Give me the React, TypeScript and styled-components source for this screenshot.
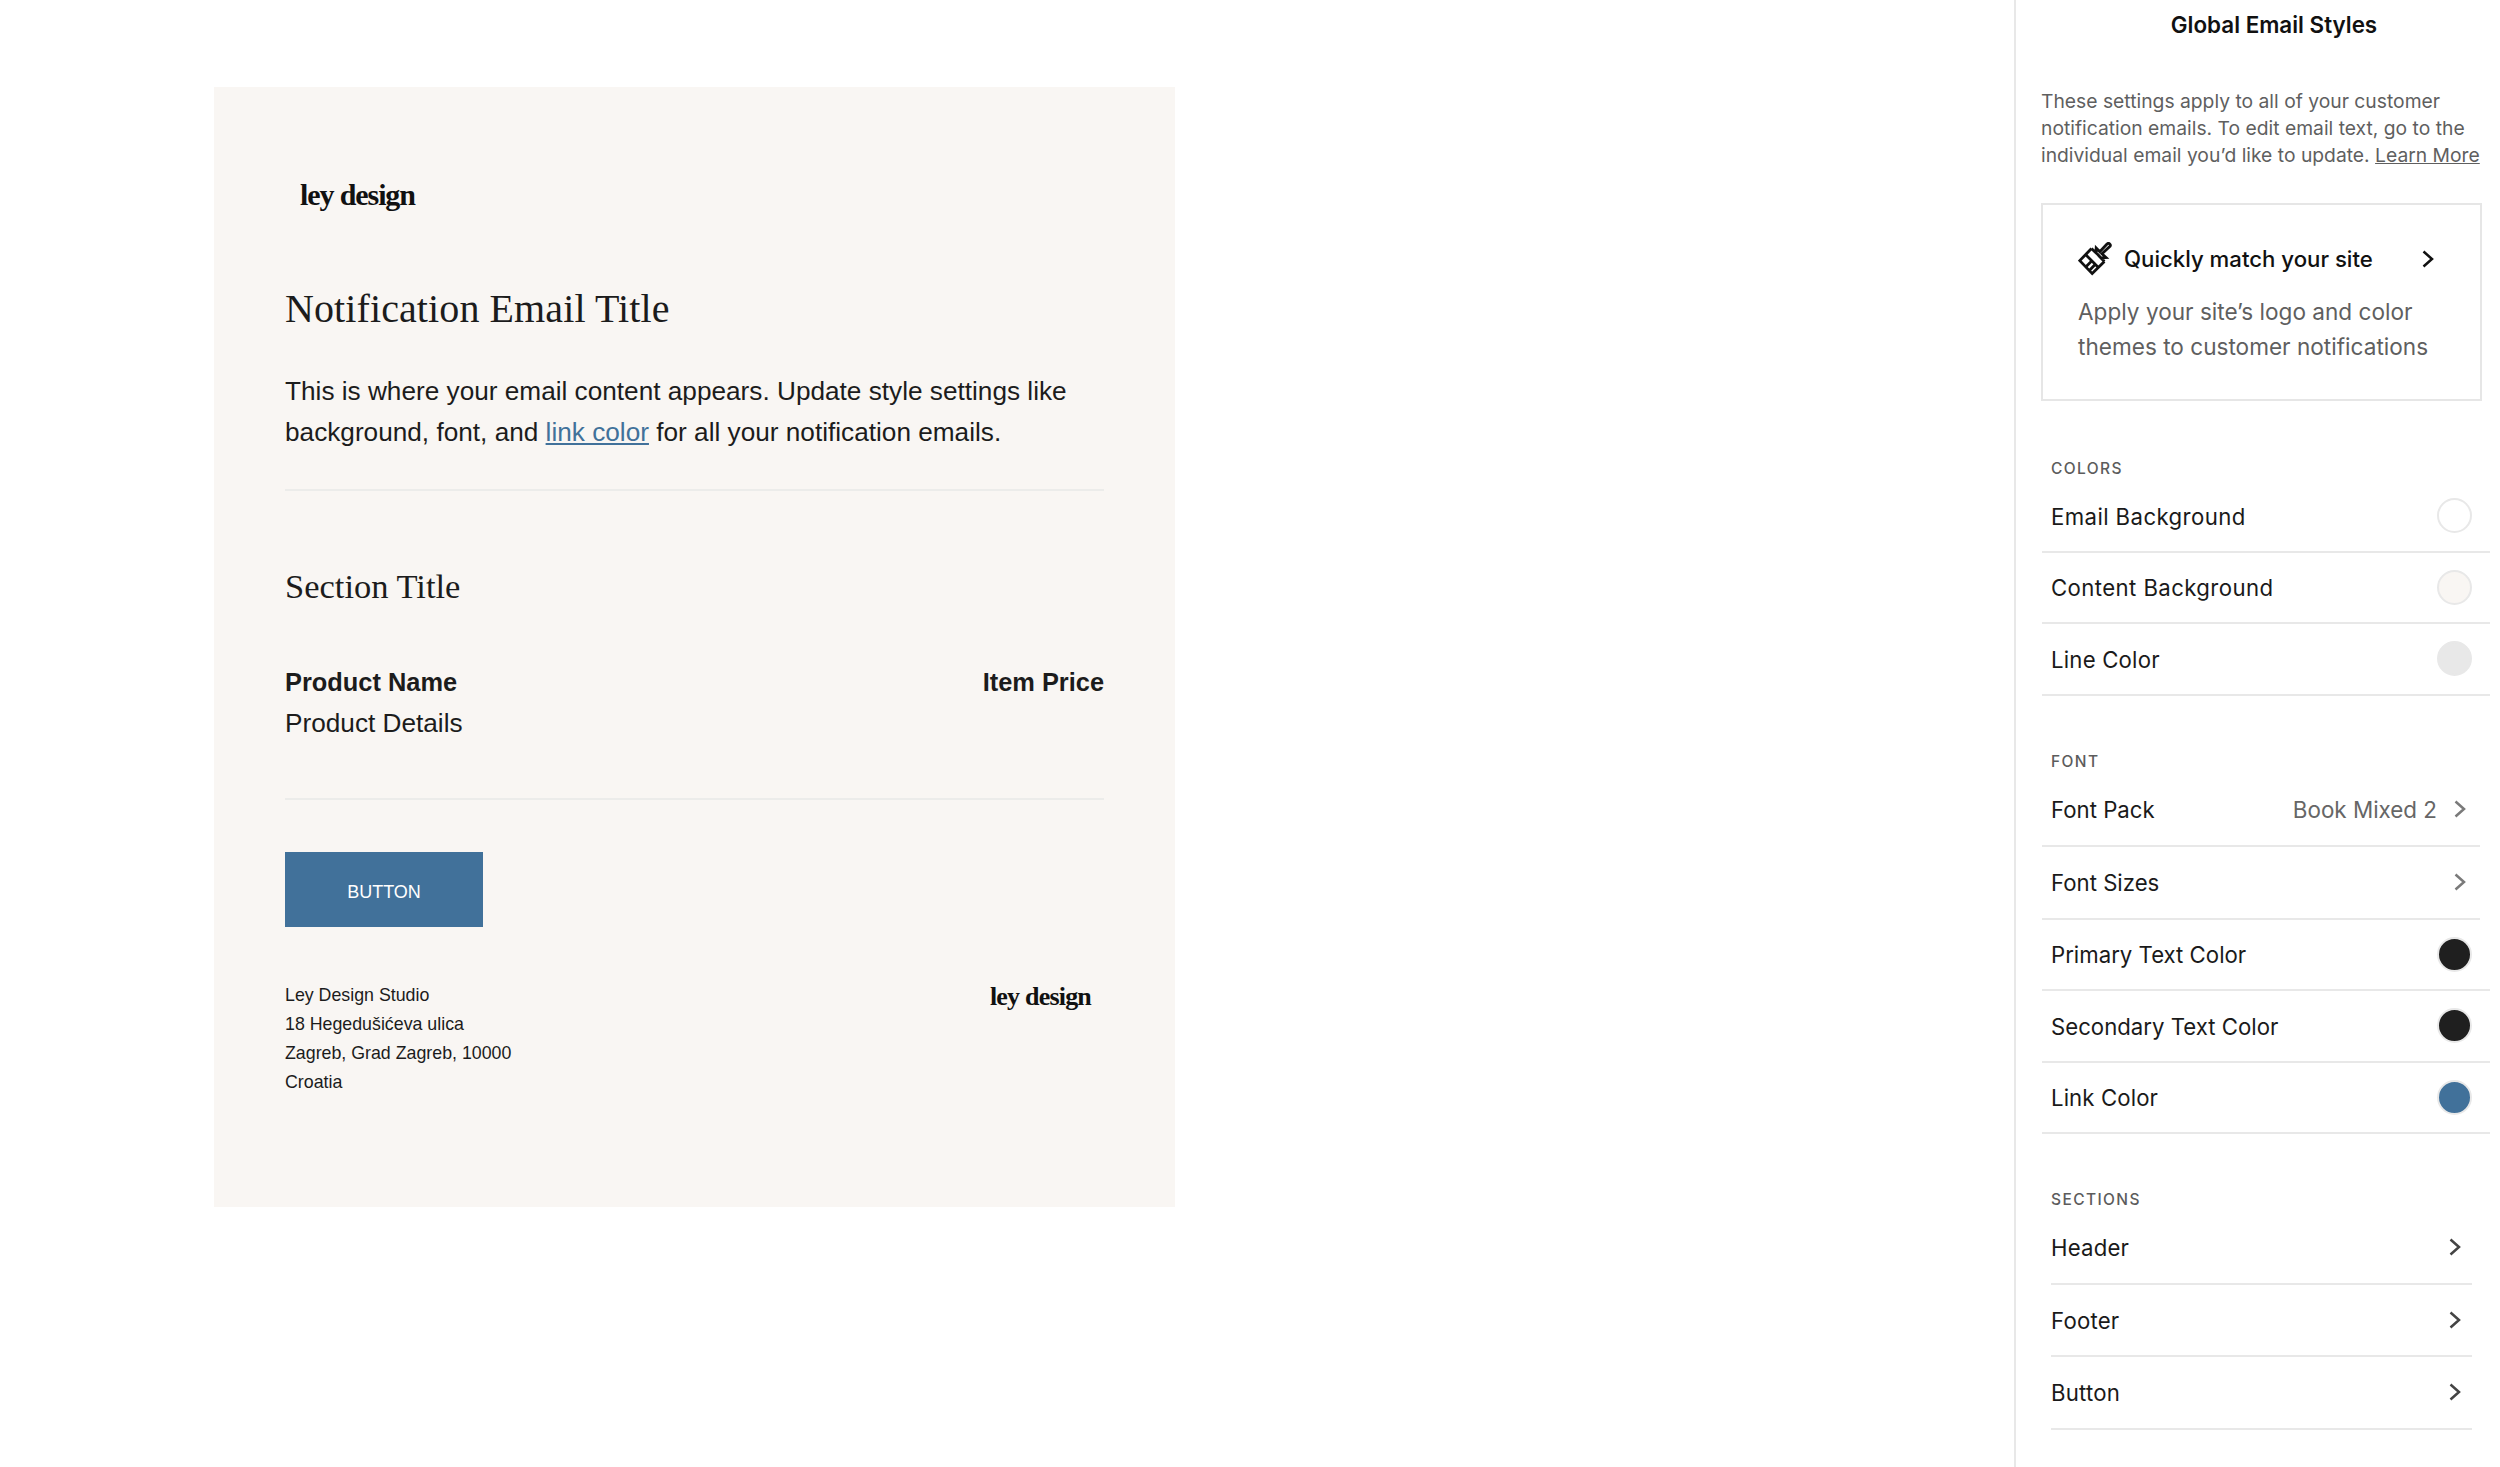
import React, { ReactElement } from 'react';
import styled, { createGlobalStyle } from 'styled-components';

const GlobalStyle = createGlobalStyle`
  html, body {
    margin: 0;
    padding: 0;
    background: #fff;
  }
  * {
    box-sizing: border-box;
  }
`;

type RowKind = 'color' | 'font' | 'section';

const colorRows = [
  { label: 'Email Background', swatch: '#ffffff', tracking: 0.4 },
  { label: 'Content Background', swatch: '#f9f6f3', tracking: 0.4 },
  { label: 'Line Color', swatch: '#e8e8e8', tracking: 0.2 },
];

const textColorRows = [
  { label: 'Primary Text Color', swatch: '#1f1f1f', tracking: 0 },
  { label: 'Secondary Text Color', swatch: '#1f1f1f', tracking: 0 },
  { label: 'Link Color', swatch: '#41719a', tracking: 0.1 },
];

const sectionRows = ['Header', 'Footer', 'Button'];

const Chevron = ({ color }: { color: string }): ReactElement => (
  <ChevronIcon viewBox="0 0 12 18" fill="none" stroke={color} strokeWidth="2.5">
    <polyline points="1.5,1.5 10,9 1.5,16.5" />
  </ChevronIcon>
);

const BrushIcon = (): ReactElement => (
  <BrushSvg viewBox="0 0 34 34" fill="none" stroke="#111" strokeWidth="2.8" strokeLinejoin="miter">
    <path d="M13.5 6.5 L1.8 18.6 L14.2 31.6 L26.4 19.4" />
    <path d="M13.5 6.5 L16 9 L19.8 12.6 L26.4 19.4 L22.8 15.8 L28 15.6 L24 11.8 L32 4.4 C32.8 3.4 32.4 2.4 31.6 1.8 C30.8 1.2 29.8 1.2 29 2 L21.8 9.8 L18.2 6 L18 10.6" />
    <path d="M7.6 12.6 L20.4 25.4" />
    <path d="M8 24.8 L14 18.6 M11.6 28.2 L17.4 22.2" />
  </BrushSvg>
);

const App = (): ReactElement => {
  return (
    <Page>
      <GlobalStyle />
      <Main>
        <Card>
          <Logo>ley design</Logo>
          <EmailTitle>Notification Email Title</EmailTitle>
          <Paragraph>
            This is where your email content appears. Update style settings like
            <br />
            background, font, and <EmailLink>link color</EmailLink> for all your notification emails.
          </Paragraph>
          <CardDivider />
          <SectionTitle>Section Title</SectionTitle>
          <ProductRow>
            <strong>Product Name</strong>
            <strong>Item Price</strong>
          </ProductRow>
          <ProductDetails>Product Details</ProductDetails>
          <ProductDivider />
          <EmailButton>BUTTON</EmailButton>
          <EmailFooter>
            <Address>
              Ley Design Studio
              <br />
              18 Hegedušićeva ulica
              <br />
              Zagreb, Grad Zagreb, 10000
              <br />
              Croatia
            </Address>
            <FooterLogo>ley design</FooterLogo>
          </EmailFooter>
        </Card>
      </Main>

      <Sidebar>
        <SidebarTitle>Global Email Styles</SidebarTitle>
        <Description>
          These settings apply to all of your customer
          <br />
          notification emails. To edit email text, go to the
          <br />
          individual email you’d like to update. <LearnMore>Learn More</LearnMore>
        </Description>

        <MatchBox>
          <MatchHeader>
            <BrushIcon />
            <MatchTitle>Quickly match your site</MatchTitle>
            <Chevron color="#111" />
          </MatchHeader>
          <MatchBody>
            Apply your site’s logo and color
            <br />
            themes to customer notifications
          </MatchBody>
        </MatchBox>

        <Group>
          <GroupLabel>COLORS</GroupLabel>
          {colorRows.map((row) => (
            <Row key={row.label} $kind="color" $height={71.5}>
              <RowLabel $tracking={row.tracking}>{row.label}</RowLabel>
              <Swatch $color={row.swatch} />
            </Row>
          ))}
        </Group>

        <Group>
          <GroupLabel>FONT</GroupLabel>
          <Row $kind="font" $height={73}>
            <RowLabel>Font Pack</RowLabel>
            <RowValue>
              <ValueText>Book Mixed 2</ValueText>
              <Chevron color="#7a7a7a" />
            </RowValue>
          </Row>
          <Row $kind="font" $height={73}>
            <RowLabel>Font Sizes</RowLabel>
            <Chevron color="#7a7a7a" />
          </Row>
          {textColorRows.map((row) => (
            <Row key={row.label} $kind="color" $height={71.5}>
              <RowLabel $tracking={row.tracking}>{row.label}</RowLabel>
              <Swatch $color={row.swatch} />
            </Row>
          ))}
        </Group>

        <Group>
          <GroupLabel>SECTIONS</GroupLabel>
          {sectionRows.map((label) => (
            <Row key={label} $kind="section" $height={72.5}>
              <RowLabel $tracking={0.2}>{label}</RowLabel>
              <Chevron color="#444" />
            </Row>
          ))}
        </Group>
      </Sidebar>
    </Page>
  );
};

const Page = styled.div`
  display: flex;
  width: 2500px;
  height: 1467px;
  overflow: hidden;
  background: #fff;
`;

const Main = styled.main`
  flex: 1;
  padding: 87px 0 0 214px;
`;

const Card = styled.div`
  width: 961px;
  height: 1120px;
  padding: 88px 71px 0;
  background: #f9f6f3;
  color: #1c1c1c;
  font-family: 'Liberation Sans', Arial, sans-serif;
`;

const Logo = styled.div`
  padding-left: 15px;
  font-family: 'Liberation Serif', serif;
  font-size: 30px;
  font-weight: 700;
  line-height: 40px;
  letter-spacing: -1.1px;
  color: #111;
`;

const EmailTitle = styled.h1`
  margin: 69px 0 0;
  font-family: 'Liberation Serif', serif;
  font-size: 40px;
  font-weight: 400;
  line-height: 50px;
  letter-spacing: 0.1px;
`;

const Paragraph = styled.p`
  margin: 37px 0 0;
  font-size: 26.2px;
  line-height: 41px;
  white-space: nowrap;
`;

const EmailLink = styled.span`
  color: #41719a;
  text-decoration: underline;
`;

const CardDivider = styled.div`
  height: 2px;
  margin-top: 36px;
  background: #ececea;
`;

const SectionTitle = styled.h2`
  margin: 73px 0 0;
  font-family: 'Liberation Serif', serif;
  font-size: 34.5px;
  font-weight: 400;
  line-height: 44px;
`;

const ProductRow = styled.div`
  display: flex;
  justify-content: space-between;
  margin-top: 54px;
  font-size: 25.4px;
  line-height: 41px;
`;

const ProductDetails = styled.div`
  font-size: 26.2px;
  line-height: 41px;
`;

const ProductDivider = styled(CardDivider)`
  margin-top: 54px;
`;

const EmailButton = styled.div`
  display: flex;
  align-items: center;
  justify-content: center;
  width: 198px;
  height: 75px;
  margin-top: 52px;
  padding-top: 6px;
  background: #41719a;
  color: #fff;
  font-size: 18px;
`;

const EmailFooter = styled.div`
  display: flex;
  justify-content: space-between;
  margin-top: 54px;
`;

const Address = styled.div`
  font-size: 17.8px;
  line-height: 29px;
`;

const FooterLogo = styled.div`
  margin: 1px 13px 0 0;
  font-family: 'Liberation Serif', serif;
  font-size: 26px;
  font-weight: 700;
  line-height: 29px;
  letter-spacing: -0.8px;
  color: #111;
`;

const Sidebar = styled.aside`
  width: 486px;
  flex-shrink: 0;
  padding-left: 25px;
  border-left: 2px solid #e8e8e8;
  font-family: Inter, 'Liberation Sans', sans-serif;
  color: #1a1a1a;
`;

const SidebarTitle = styled.h2`
  margin: 0;
  padding-left: 7px;
  font-size: 22.4px;
  font-weight: 600;
  line-height: 50px;
  text-align: center;
  color: #111;
`;

const Description = styled.p`
  margin: 38px 0 0;
  font-size: 19.3px;
  line-height: 27px;
  white-space: nowrap;
  color: #5f5f5f;
`;

const LearnMore = styled.span`
  text-decoration: underline;
`;

const MatchBox = styled.div`
  width: 441px;
  height: 198px;
  margin-top: 34px;
  padding: 37px 46px 0 35px;
  border: 2px solid #e6e6e6;
`;

const MatchHeader = styled.div`
  display: flex;
  align-items: center;
  gap: 12px;
  height: 33px;
`;

const BrushSvg = styled.svg`
  width: 34px;
  height: 34px;
  flex-shrink: 0;
`;

const MatchTitle = styled.span`
  flex: 1;
  font-size: 22.2px;
  font-weight: 500;
  white-space: nowrap;
  color: #111;
`;

const MatchBody = styled.p`
  margin: 19px 0 0;
  font-size: 22.6px;
  line-height: 35px;
  white-space: nowrap;
  color: #5f5f5f;
`;

const Group = styled.section`
  margin-top: 55px;

  ${MatchBox} + & {
    margin-top: 57px;
  }
`;

const GroupLabel = styled.div`
  height: 23px;
  padding-left: 10px;
  font-size: 15.5px;
  font-weight: 500;
  line-height: 22px;
  letter-spacing: 1.4px;
  color: #5c5c5c;
`;

const rowBox: Record<RowKind, { marginLeft: number; width: number; paddingLeft: number; paddingRight: number }> = {
  color: { marginLeft: 1, width: 448, paddingLeft: 9, paddingRight: 18 },
  font: { marginLeft: 1, width: 438, paddingLeft: 9, paddingRight: 14 },
  section: { marginLeft: 10, width: 421, paddingLeft: 0, paddingRight: 11 },
};

const Row = styled.div<{ $kind: RowKind; $height: number }>`
  display: flex;
  align-items: center;
  justify-content: space-between;
  height: ${({ $height }) => $height}px;
  margin-left: ${({ $kind }) => rowBox[$kind].marginLeft}px;
  width: ${({ $kind }) => rowBox[$kind].width}px;
  padding: 0 ${({ $kind }) => rowBox[$kind].paddingRight}px 0 ${({ $kind }) => rowBox[$kind].paddingLeft}px;
  border-bottom: 2px solid #e8e8e8;
`;

const RowLabel = styled.span<{ $tracking?: number }>`
  padding-top: 1px;
  font-size: 22.2px;
  letter-spacing: ${({ $tracking }) => $tracking ?? 0}px;
  color: #1a1a1a;
`;

const RowValue = styled.div`
  display: flex;
  align-items: center;
  gap: 17px;
`;

const ValueText = styled.span`
  font-size: 22.4px;
  color: #666;
`;

const Swatch = styled.span<{ $color: string }>`
  width: 35px;
  height: 35px;
  border-radius: 50%;
  background: ${({ $color }) => $color};
  border: 2px solid #e8e8e8;
`;

const ChevronIcon = styled.svg`
  width: 12px;
  height: 18px;
  flex-shrink: 0;
`;

export default App;
